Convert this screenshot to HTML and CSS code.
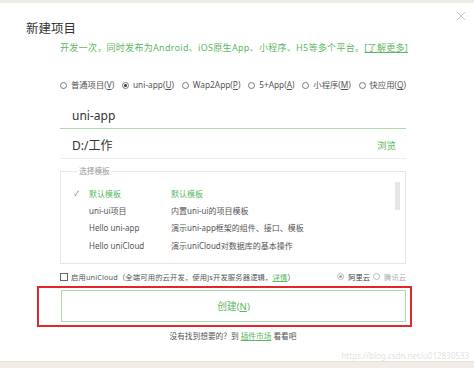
FILE: index.html
```html
<!DOCTYPE html>
<html lang="zh-CN">

<head>
    <meta charset="UTF-8">
    <meta name="viewport" content="width=device-width, initial-scale=1.0">
    <title>新建项目</title>
    <link rel="stylesheet" href="styles.css">
</head>

<body>
    <div class="topbar"></div>

    <div class="dialog">
        <button class="close" aria-label="关闭">
            <svg width="10" height="10" viewBox="0 0 10 10">
                <path d="M1 1 L9 9 M9 1 L1 9" stroke="#c9c9c9" stroke-width="1" fill="none" />
            </svg>
        </button>

        <h1 class="title">新建项目</h1>

        <div class="content">
            <p class="intro">开发一次，同时发布为Android、iOS原生App、小程序、H5等多个平台。<a href="#">[了解更多]</a></p>

            <div class="types">
                <label class="radio"><span class="dot"></span><span>普通项目(<u>V</u>)</span></label>
                <label class="radio"><span class="dot on"></span><span>uni-app(<u>U</u>)</span></label>
                <label class="radio"><span class="dot"></span><span>Wap2App(<u>P</u>)</span></label>
                <label class="radio"><span class="dot"></span><span>5+App(<u>A</u>)</span></label>
                <label class="radio"><span class="dot"></span><span>小程序(<u>M</u>)</span></label>
                <label class="radio"><span class="dot"></span><span>快应用(<u>Q</u>)</span></label>
            </div>

            <div class="field name"><span>uni-app</span></div>
            <div class="field"><span>D:/工作</span><a class="browse" href="#">浏览</a></div>

            <fieldset class="templates">
                <legend>选择模板</legend>
                <div class="scrollbar"></div>
                <ul>
                    <li class="selected"><span class="check">✓</span><span>默认模板</span><span>默认模板</span></li>
                    <li><span class="check"></span><span>uni-ui项目</span><span>内置uni-ui的项目模板</span></li>
                    <li><span class="check"></span><span>Hello uni-app</span><span>演示uni-app框架的组件、接口、模板</span></li>
                    <li><span class="check"></span><span>Hello uniCloud</span><span>演示uniCloud对数据库的基本操作</span></li>
                </ul>
            </fieldset>

            <div class="cloud">
                <label class="checkbox"><span class="box"></span><span>启用uniCloud（全端可用的云开发，使用js开发服务器逻辑，<a href="#">详情</a>）</span></label>
                <div class="providers">
                    <label class="radio"><span class="dot on"></span><span>阿里云</span></label>
                    <label class="radio off"><span class="dot"></span><span>腾讯云</span></label>
                </div>
            </div>

            <div class="highlight">
                <button class="create">创建(<u>N</u>)</button>
            </div>

            <p class="more">没有找到想要的？到 <a href="#">插件市场</a> 看看吧</p>
        </div>

        <span class="watermark">https://blog.csdn.net/u012830533</span>
    </div>

    <div class="bottombar"></div>
</body>

</html>
```

FILE: styles.css
```css
body {
    margin: 0;
    background: #efede5;
    font-family: "Noto Sans", "Noto Sans CJK SC", sans-serif;
    color: #555;
}

a {
    color: #5bb85f;
}

.topbar {
    height: 3px;
    background: #efede5;
}

.dialog {
    position: relative;
    height: 358px;
    background: #fff;
}

.close {
    position: absolute;
    top: 6px;
    right: 8px;
    padding: 0;
    border: none;
    background: none;
}

.title {
    margin: 0;
    padding: 18px 0 0 26px;
    font-size: 12.5px;
    line-height: 16px;
    font-weight: normal;
    color: #333;
}

.content {
    margin-left: 60px;
    width: 346px;
}

.intro {
    margin: 4px 0 0;
    font-size: 9px;
    line-height: 14px;
    letter-spacing: 0.3px;
    color: #5bb85f;
    white-space: nowrap;
}

.types {
    display: flex;
    justify-content: space-between;
    margin-top: 24px;
    font-size: 8.3px;
    line-height: 12px;
}

.radio {
    display: flex;
    align-items: center;
    gap: 4px;
    white-space: nowrap;
}

.dot {
    position: relative;
    width: 5px;
    height: 5px;
    border: 1px solid #777;
    border-radius: 50%;
}

.dot.on::after {
    content: "";
    position: absolute;
    top: 1px;
    left: 1px;
    width: 3px;
    height: 3px;
    border-radius: 50%;
    background: #333;
}

.field {
    display: flex;
    align-items: center;
    justify-content: space-between;
    box-sizing: border-box;
    height: 30px;
    padding: 3px 10px 0 12px;
    border-bottom: 1px solid #eee;
    font-size: 12px;
    color: #333;
}

.field.name {
    margin-top: 8px;
    border-bottom-color: #a6dcaa;
}

.browse {
    font-size: 9.5px;
    text-decoration: none;
}

.templates {
    position: relative;
    margin: 7px 0 0;
    padding: 9px 0 9px 13px;
    border: 1px solid #e6e6e6;
}

.templates legend {
    margin-left: 3px;
    padding: 0 2px;
    font-size: 7.7px;
    line-height: 10px;
    color: #999;
}

.scrollbar {
    position: absolute;
    top: 6px;
    right: 5px;
    width: 5px;
    height: 28px;
    background: #e6e6e6;
}

.templates ul {
    margin: 0;
    padding: 0;
    list-style: none;
    font-size: 8px;
    line-height: 17.2px;
}

.templates li {
    display: grid;
    grid-template-columns: 15px 82px 1fr;
}

.templates li.selected {
    color: #5bb85f;
}

.check {
    color: #777;
    font-size: 7px;
}

.cloud {
    display: flex;
    justify-content: space-between;
    align-items: center;
    margin-top: 7px;
    font-size: 7.3px;
    line-height: 12px;
}

.checkbox {
    display: flex;
    align-items: center;
    white-space: nowrap;
    letter-spacing: 0.15px;
}

.box {
    width: 6px;
    height: 6px;
    margin-right: 3px;
    border: 1px solid #666;
}

.providers {
    display: flex;
    gap: 3px;
    color: #444;
}

.providers .dot {
    border-color: #bbb;
}

.providers .dot.on::after {
    background: #aaa;
}

.providers .off {
    color: #aaa;
}

.highlight {
    box-sizing: border-box;
    width: 375px;
    margin: 3px 0 0 -23px;
    padding: 2px 4px 3px 22px;
    border: 2px solid #e3262b;
}

.create {
    display: block;
    width: 345px;
    height: 32px;
    border: 1px solid #a6dcaa;
    background: #fff;
    color: #5bb85f;
    font-family: inherit;
    font-size: 9.7px;
}

.more {
    margin: 4px 0 0;
    text-align: center;
    font-size: 7.7px;
    line-height: 11px;
}

.watermark {
    position: absolute;
    top: 347px;
    right: 5px;
    font-size: 8px;
    color: #e4e4e4;
}

.bottombar {
    height: 6px;
    border-top: 1px solid #e4e1d6;
    background: #efede5;
}
```
